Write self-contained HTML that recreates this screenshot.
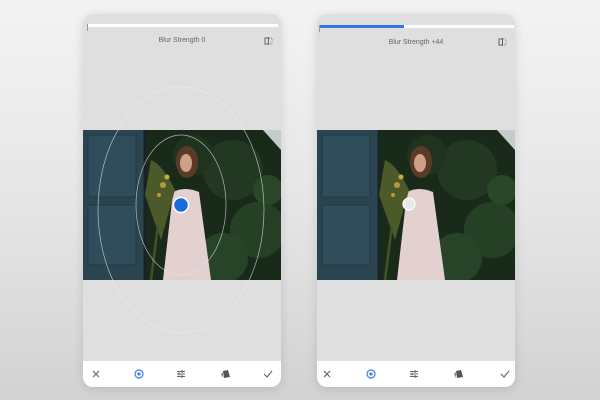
<!DOCTYPE html>
<html><head><style>
*{margin:0;padding:0;box-sizing:border-box}
body{width:600px;height:400px;overflow:hidden;background:linear-gradient(#f3f3f3 0%,#e6e6e6 50%,#d2d2d2 100%);font-family:"Liberation Sans",sans-serif;position:relative}
.ph{position:absolute;top:14px;width:198px;height:373px;background:#dfdfdf;border-radius:10px;overflow:hidden;box-shadow:0 2px 10px rgba(0,0,0,.12)}
.sl{position:absolute;left:4px;right:3px;top:10px;height:3px;background:#fff}
.tick{position:absolute;left:4px;top:10px;width:1px;height:7px;background:#999}
.t{position:absolute;left:0;right:0;top:23px;text-align:center;font-size:7px;color:#666}
.cmp{position:absolute;right:8px;top:23px;width:9px;height:8px}
.photo{position:absolute;left:0;top:116px;width:198px;height:150px}
.bar{position:absolute;left:0;bottom:0;width:198px;height:26px;background:#fff}
.bar svg{position:absolute;top:8px}
</style></head><body>
<svg width="0" height="0" style="position:absolute"><defs>
<symbol id="pic" viewBox="0 0 198 150">
<rect width="198" height="150" fill="#141d14"/>
<rect x="60" y="0" width="138" height="150" fill="#1a2a1a"/>
<circle cx="150" cy="40" r="30" fill="#223822"/><circle cx="175" cy="100" r="28" fill="#264026"/><circle cx="110" cy="25" r="20" fill="#1f331f"/><circle cx="140" cy="128" r="25" fill="#284428"/><circle cx="185" cy="60" r="15" fill="#2a4628"/>
<polygon points="180,0 198,0 198,20" fill="#c4cccc"/>
<rect x="0" y="0" width="62" height="150" fill="#2a4450"/>
<rect x="5" y="5" width="48" height="62" fill="#2f4d5a" stroke="#203944"/>
<rect x="5" y="75" width="48" height="60" fill="#2f4d5a" stroke="#203944"/>
<path d="M62 0V150" stroke="#182328" stroke-width="3"/>
<ellipse cx="104" cy="32" rx="11" ry="16" fill="#5a3b28"/>
<ellipse cx="103" cy="33" rx="6" ry="9" fill="#cf9f88"/>
<path d="M90 62 Q102 56 116 62 L128 150 H80 Z" fill="#e3d0d1"/>
<path d="M92 60 Q80 35 68 30 L62 65 L78 110 Z" fill="#4c5a2a"/>
<circle cx="80" cy="55" r="3" fill="#b8993a"/><circle cx="84" cy="47" r="2.5" fill="#c9aa3e"/><circle cx="76" cy="65" r="2" fill="#b8993a"/>
<path d="M75 95 L68 150" stroke="#3e5426" stroke-width="2.5"/>
</symbol>
</defs></svg>

<div class="ph" style="left:83px">
<div class="sl"></div><div class="tick"></div>
<div class="t">Blur Strength 0</div>
<svg class="cmp" viewBox="0 0 9 8"><path d="M4.5 0V8M4 1H1V7H4" stroke="#666" fill="none"/><path d="M5 1H8V7H5" stroke="#888" fill="none" stroke-dasharray="1 1"/></svg>
<svg class="photo" viewBox="0 0 198 150"><use href="#pic"/></svg>
<svg style="position:absolute;left:0;top:0" width="198" height="373"><ellipse cx="98" cy="191" rx="45" ry="70" fill="none" stroke="#e8e8e8" stroke-width="0.7" opacity=".7"/><ellipse cx="98" cy="196" rx="83" ry="123" fill="none" stroke="#eee" stroke-width="0.7" opacity=".7"/><circle cx="98" cy="191" r="7.5" fill="#1a6be0" stroke="#fff" stroke-width="1.5"/></svg>
<div class="bar">
<svg style="left:8px" width="10" height="10" viewBox="0 0 10 10"><path d="M2 2L8 8M8 2L2 8" stroke="#666" stroke-width="1.2"/></svg>
<svg style="left:51px" width="10" height="10" viewBox="0 0 10 10"><circle cx="5" cy="5" r="4" fill="none" stroke="#3a7ee8" stroke-width="1.2"/><circle cx="5" cy="5" r="1.6" fill="#3a7ee8"/></svg>
<svg style="left:93px" width="10" height="10" viewBox="0 0 10 10"><path d="M1 2.5H9M1 5H9M1 7.5H9M6 1V4M3 3.5V6.5M6 6V9" stroke="#666" stroke-width="1"/></svg>
<svg style="left:137px" width="10" height="10" viewBox="0 0 10 10"><path d="M3 2L8 1L10 8L4 9Z" fill="#555"/><path d="M1 5L3 3V9Z" fill="#888"/></svg>
<svg style="left:180px" width="10" height="10" viewBox="0 0 10 10"><path d="M1 5L4 8L9 2" stroke="#666" stroke-width="1.1" fill="none"/></svg>
</div>
</div>

<div class="ph" style="left:317px">
<div class="sl" style="top:11px;left:2px;right:1px"></div><div class="sl" style="top:11px;left:2px;right:auto;width:85px;background:#2f78e0"></div><div class="tick" style="left:2px;top:11px"></div>
<div class="t" style="top:25px">Blur Strength +44</div>
<svg class="cmp" style="top:24px" viewBox="0 0 9 8"><path d="M4.5 0V8M4 1H1V7H4" stroke="#666" fill="none"/><path d="M5 1H8V7H5" stroke="#888" fill="none" stroke-dasharray="1 1"/></svg>
<svg class="photo" viewBox="0 0 198 150"><use href="#pic"/></svg>
<svg style="position:absolute;left:0;top:0" width="198" height="373"><circle cx="92" cy="190" r="6" fill="#e8e8e8" stroke="#fff" stroke-width="1.2"/></svg>
<div class="bar">
<svg style="left:5px" width="10" height="10" viewBox="0 0 10 10"><path d="M2 2L8 8M8 2L2 8" stroke="#666" stroke-width="1.2"/></svg>
<svg style="left:49px" width="10" height="10" viewBox="0 0 10 10"><circle cx="5" cy="5" r="4" fill="none" stroke="#3a7ee8" stroke-width="1.2"/><circle cx="5" cy="5" r="1.6" fill="#3a7ee8"/></svg>
<svg style="left:92px" width="10" height="10" viewBox="0 0 10 10"><path d="M1 2.5H9M1 5H9M1 7.5H9M6 1V4M3 3.5V6.5M6 6V9" stroke="#666" stroke-width="1"/></svg>
<svg style="left:136px" width="10" height="10" viewBox="0 0 10 10"><path d="M3 2L8 1L10 8L4 9Z" fill="#555"/><path d="M1 5L3 3V9Z" fill="#888"/></svg>
<svg style="left:183px" width="10" height="10" viewBox="0 0 10 10"><path d="M1 5L4 8L9 2" stroke="#666" stroke-width="1.1" fill="none"/></svg>
</div>
</div>
</body></html>
